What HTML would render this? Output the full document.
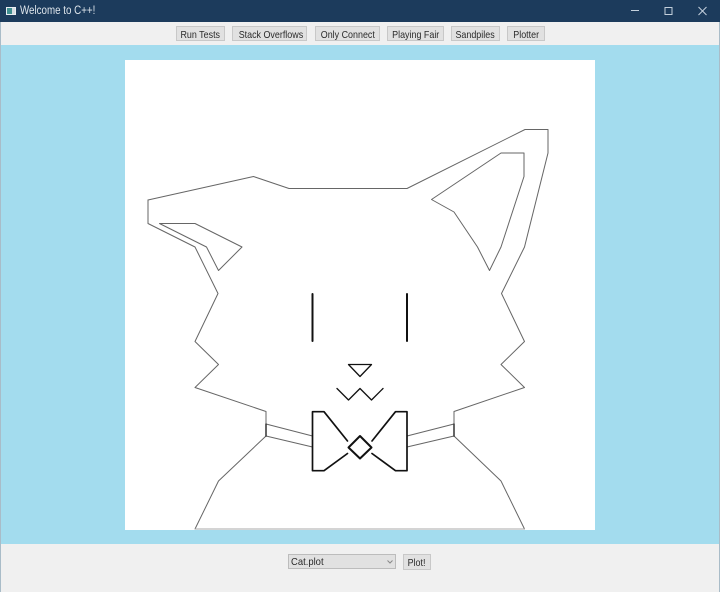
<!DOCTYPE html>
<html>
<head>
<meta charset="utf-8">
<style>
html,body{margin:0;padding:0}
body{width:720px;height:592px;position:relative;overflow:hidden;background:#f0f0f0;font-family:"Liberation Sans",sans-serif;color:#2a2a2a}
div{position:absolute;box-sizing:border-box}
#title{left:0;top:0;width:720px;height:22px;background:#1c3b5c}
#ttext{left:20px;top:3px;font-size:11.5px;line-height:17px;color:#dfe6ec;white-space:nowrap;transform:scaleX(.85);transform-origin:0 0}
#top{left:1px;top:22px;width:718px;height:23px;background:#f0f0f0}
#blue{left:1px;top:45px;width:718px;height:499px;background:#a3dcee}
#edgeL{left:0;top:22px;width:1px;height:570px;background:#a9bcc8}
#edgeR{left:719px;top:22px;width:1px;height:570px;background:#a9bcc8}
#canvas{left:125px;top:60px;width:470px;height:470px;background:#fff}
.b{height:15px;top:26px;background:#e1e1e1;border:1px solid #c8c8c8;font-size:10.5px;line-height:14px;text-align:center;white-space:nowrap}
.b span{display:inline-block;position:relative;top:.5px;transform:scaleX(.85);transform-origin:50% 50%}
#sel{left:288px;top:554px;width:108px;height:15px;background:#e1e1e1;border:1px solid #bcbcbc;font-size:10.5px;line-height:15px;padding-left:2px}
#sel span{display:inline-block;transform:scaleX(.9);transform-origin:0 50%}
</style>
</head>
<body>
<div id="title"></div>
<svg style="position:absolute;left:6px;top:7px" width="10" height="8"><rect x="0" y="0" width="10" height="8" fill="#e8eef2"/><rect x="1" y="1" width="5" height="6" fill="#3f8f90"/><rect x="6" y="1" width="3" height="6" fill="#d6dde2"/></svg>
<div id="ttext">Welcome to C++!</div>
<svg style="position:absolute;left:620px;top:0" width="100" height="22" fill="none" stroke="#c4d0dc" stroke-width="1">
<path d="M11 10.5H19"/>
<rect x="45" y="7.500" width="7" height="7"/>
<path d="M78.500 7L86.500 15M86.500 7L78.500 15"/>
</svg>
<div id="edgeL"></div><div id="edgeR"></div>
<div id="top"></div>
<div class="b" style="left:176px;width:49px"><span>Run Tests</span></div>
<div class="b" style="left:232px;width:75px"><span>Stack Overflows</span></div>
<div class="b" style="left:315px;width:65px"><span>Only Connect</span></div>
<div class="b" style="left:387px;width:57px"><span>Playing Fair</span></div>
<div class="b" style="left:451px;width:49px"><span>Sandpiles</span></div>
<div class="b" style="left:507px;width:38px"><span>Plotter</span></div>
<div id="blue"></div>
<div id="canvas"></div>
<svg style="position:absolute;left:0;top:0" width="720" height="592" fill="none" stroke-linejoin="round" stroke-linecap="round">
<g stroke="#666" stroke-width="1">
<path d="M148 200L253.500 176.500L289 188.500H407L525 129.500H548V153L524.500 247L501.500 293.500L524.500 341.500L501 364.500L524.500 387.500L454 411.500V436L501 481L524.500 529"/>
<path d="M148 200V223.500L195 247L218 293.500L195 341.500L218.500 364.500L195 387.500L266 411.500V436L218.500 481L195 529"/>
<path d="M159.500 223.500H195L242 247L218.500 270.500L206.500 247Z"/>
<path d="M501 153H524V176.500L501 247L489.500 270.500L477.500 247L454 212L431.500 199.500Z"/>
<path d="M266 424L312.500 436M266 436L312.500 447M454 424L407 436M454 436L407 447"/>
<path d="M266 424V436M454 424V436" stroke="#333" stroke-width="1.500"/>
<path d="M195 529H524.500" stroke="#a8a8a8"/>
</g>
<g stroke="#111" stroke-width="1.700">
<path d="M312.500 294V341M407 294V341" stroke-width="2"/>
<path d="M348.500 364.500H371.500L360 376.500Z" stroke-width="1.300"/>
<path d="M337 388.500L348.500 400L360 388.500L371.500 400L383 388.500" stroke-width="1.300"/>
<path d="M347.500 441L324 411.700H312.500V470.700H324L347.500 453.500"/>
<path d="M372 441L395.500 411.700H407V470.700H395.500L372 453.500"/>
<path d="M360 436L371.500 447.500L360 458.500L348.500 447.500Z" stroke-width="2"/>
</g>
</svg>
<div id="sel"><span>Cat.plot</span></div>
<svg style="position:absolute;left:387px;top:560px" width="6" height="4" fill="none" stroke="#888" stroke-width="1"><path d="M.5 .5L3 3L5.500 .5"/></svg>
<div class="b" style="left:403px;top:554px;width:28px;height:16px;line-height:15px"><span>Plot!</span></div>
</body>
</html>
